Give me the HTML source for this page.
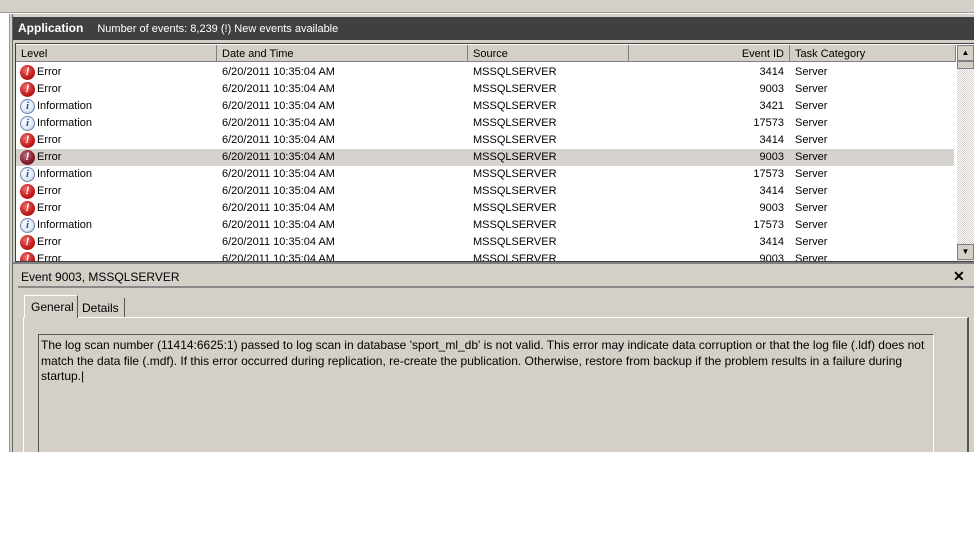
<!DOCTYPE html>
<html><head><style>
*{margin:0;padding:0;box-sizing:border-box}
body{width:974px;height:540px;background:#fff;position:relative;overflow:hidden;font-family:"Liberation Sans",sans-serif;font-size:11px;color:#000}
.abs{position:absolute}
.row{position:absolute;left:17px;width:938px;height:17px;line-height:17px}
.row span{position:absolute;top:0}
.ic{position:absolute;left:4px;top:1px;width:15px;height:15px;border-radius:50%;color:#fff;font-weight:bold;font-size:11px;line-height:15px;text-align:center}
.err{background:radial-gradient(circle at 40% 35%,#f07070,#c01818 60%,#901010)}
.inf{background:radial-gradient(circle at 40% 35%,#fff,#e0e8f4 60%,#8aa0c0);color:#1a50b0;font-family:"Liberation Serif",serif;border:1px solid #6a84b0;line-height:13px}
.hd{position:absolute;top:45px;height:17px;line-height:19px;background:#d4d0c8;border-right:1px solid #808080;border-bottom:1px solid #808080;padding-left:5px}
</style></head><body>
<div class="abs" style="left:0;top:0;width:974px;height:13px;background:#d4d0c8;border-bottom:1px solid #999"></div>
<div class="abs" style="left:9px;top:14px;width:4px;height:438px;background:#d4d0c8;border-left:1px solid #999;border-right:1px solid #666"></div>
<div class="abs" style="left:13px;top:14px;width:961px;height:3px;background:#d4d0c8"></div>
<div class="abs" style="left:13px;top:17px;width:961px;height:23px;background:#404040;color:#fff;line-height:23px;font-size:11px"><b style="margin-left:5px;font-size:12px">Application</b><span style="margin-left:14px">Number of events: 8,239 (!) New events available</span></div>
<div class="abs" style="left:13px;top:40px;width:961px;height:225px;background:#d4d0c8"></div>
<div class="abs" style="left:15px;top:43px;width:959px;height:219px;background:#fff;border:1px solid #404040;border-right:none"></div>
<div class="hd" style="left:16px;width:201px">Level</div>
<div class="hd" style="left:217px;width:251px">Date and Time</div>
<div class="hd" style="left:468px;width:161px">Source</div>
<div class="hd" style="left:629px;width:161px;text-align:right;padding-right:5px">Event ID</div>
<div class="hd" style="left:790px;width:166px">Task Category</div>
<div class="abs" style="left:957px;top:45px;width:17px;height:216px;background:repeating-conic-gradient(#fff 0 25%,#d4d0c8 0 50%) 0 0/2px 2px"></div>
<div class="abs" style="left:957px;top:45px;width:17px;height:16px;background:#d4d0c8;border:1px solid #808080;font-size:8px;text-align:center;line-height:14px">▲</div>
<div class="abs" style="left:957px;top:61px;width:17px;height:8px;background:#d4d0c8;border:1px solid #808080"></div>
<div class="abs" style="left:957px;top:244px;width:17px;height:16px;background:#d4d0c8;border:1px solid #808080;font-size:8px;text-align:center;line-height:14px">▼</div>
<div class="abs" style="left:16px;top:63px;width:941px;height:198px;overflow:hidden">
<div style="position:relative;left:-17px;top:-61px">
<div class="row" style="top:62px"><i class="ic err">!</i><span style="left:21px">Error</span><span style="left:206px">6/20/2011 10:35:04 AM</span><span style="left:457px">MSSQLSERVER</span><span style="left:618px;width:150px;text-align:right">3414</span><span style="left:779px">Server</span></div>
<div class="row" style="top:79px"><i class="ic err">!</i><span style="left:21px">Error</span><span style="left:206px">6/20/2011 10:35:04 AM</span><span style="left:457px">MSSQLSERVER</span><span style="left:618px;width:150px;text-align:right">9003</span><span style="left:779px">Server</span></div>
<div class="row" style="top:96px"><i class="ic inf">i</i><span style="left:21px">Information</span><span style="left:206px">6/20/2011 10:35:04 AM</span><span style="left:457px">MSSQLSERVER</span><span style="left:618px;width:150px;text-align:right">3421</span><span style="left:779px">Server</span></div>
<div class="row" style="top:113px"><i class="ic inf">i</i><span style="left:21px">Information</span><span style="left:206px">6/20/2011 10:35:04 AM</span><span style="left:457px">MSSQLSERVER</span><span style="left:618px;width:150px;text-align:right">17573</span><span style="left:779px">Server</span></div>
<div class="row" style="top:130px"><i class="ic err">!</i><span style="left:21px">Error</span><span style="left:206px">6/20/2011 10:35:04 AM</span><span style="left:457px">MSSQLSERVER</span><span style="left:618px;width:150px;text-align:right">3414</span><span style="left:779px">Server</span></div>
<div class="row" style="top:147px;background:#d6d3ce"><i class="ic err" style="background:radial-gradient(circle at 40% 35%,#c07080,#801828 60%,#601020)">!</i><span style="left:21px">Error</span><span style="left:206px">6/20/2011 10:35:04 AM</span><span style="left:457px">MSSQLSERVER</span><span style="left:618px;width:150px;text-align:right">9003</span><span style="left:779px">Server</span></div>
<div class="row" style="top:164px"><i class="ic inf">i</i><span style="left:21px">Information</span><span style="left:206px">6/20/2011 10:35:04 AM</span><span style="left:457px">MSSQLSERVER</span><span style="left:618px;width:150px;text-align:right">17573</span><span style="left:779px">Server</span></div>
<div class="row" style="top:181px"><i class="ic err">!</i><span style="left:21px">Error</span><span style="left:206px">6/20/2011 10:35:04 AM</span><span style="left:457px">MSSQLSERVER</span><span style="left:618px;width:150px;text-align:right">3414</span><span style="left:779px">Server</span></div>
<div class="row" style="top:198px"><i class="ic err">!</i><span style="left:21px">Error</span><span style="left:206px">6/20/2011 10:35:04 AM</span><span style="left:457px">MSSQLSERVER</span><span style="left:618px;width:150px;text-align:right">9003</span><span style="left:779px">Server</span></div>
<div class="row" style="top:215px"><i class="ic inf">i</i><span style="left:21px">Information</span><span style="left:206px">6/20/2011 10:35:04 AM</span><span style="left:457px">MSSQLSERVER</span><span style="left:618px;width:150px;text-align:right">17573</span><span style="left:779px">Server</span></div>
<div class="row" style="top:232px"><i class="ic err">!</i><span style="left:21px">Error</span><span style="left:206px">6/20/2011 10:35:04 AM</span><span style="left:457px">MSSQLSERVER</span><span style="left:618px;width:150px;text-align:right">3414</span><span style="left:779px">Server</span></div>
<div class="row" style="top:249px"><i class="ic err">!</i><span style="left:21px">Error</span><span style="left:206px">6/20/2011 10:35:04 AM</span><span style="left:457px">MSSQLSERVER</span><span style="left:618px;width:150px;text-align:right">9003</span><span style="left:779px">Server</span></div>
</div></div>
<div class="abs" style="left:13px;top:262px;width:961px;height:190px;background:#d4d0c8;border-top:2px solid #808080"></div>
<div class="abs" style="left:21px;top:270px;font-size:12px">Event 9003, MSSQLSERVER</div>
<div class="abs" style="left:953px;top:268px;font-size:14px;font-weight:bold">✕</div>
<div class="abs" style="left:18px;top:286px;width:956px;height:2px;background:#8a8a8a"></div>
<div class="abs" style="left:23px;top:317px;width:946px;height:136px;border-top:1px solid #fff;border-left:1px solid #fff;border-right:2px solid #555"></div>
<div class="abs" style="left:24px;top:295px;width:54px;height:23px;background:#d4d0c8;border:1px solid #fff;border-bottom:none;border-right:1px solid #555;font-size:12px;padding:4px 0 0 6px">General</div>
<div class="abs" style="left:78px;top:298px;width:47px;height:19px;border-right:1px solid #555;font-size:12px;padding:3px 0 0 4px">Details</div>
<div class="abs" style="left:38px;top:334px;width:896px;height:119px;border-top:1px solid #555;border-left:1px solid #555;border-right:1px solid #fff;padding:3px 2px;font-size:12px;line-height:15.5px">The log scan number (11414:6625:1) passed to log scan in database 'sport_ml_db' is not valid. This error may indicate data corruption or that the log file (.ldf) does not match the data file (.mdf). If this error occurred during replication, re-create the publication. Otherwise, restore from backup if the problem results in a failure during startup.|</div>
<div class="abs" style="left:0;top:452px;width:974px;height:88px;background:#fff"></div>
</body></html>
